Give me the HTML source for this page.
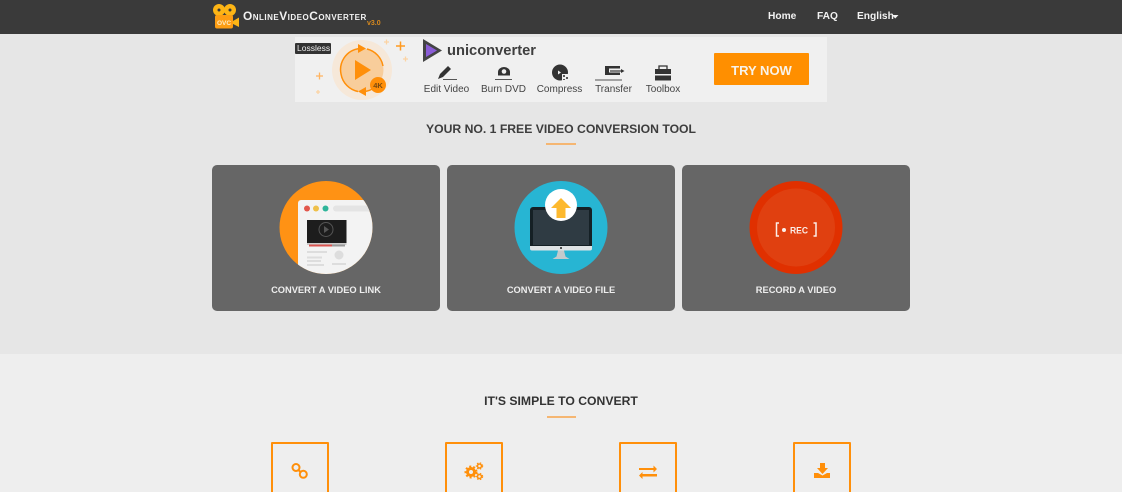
<!DOCTYPE html>
<html><head><meta charset="utf-8"><style>
html,body{margin:0;padding:0;width:1122px;height:492px;overflow:hidden;background:#eee;font-family:"Liberation Sans",sans-serif}
#w{position:relative;width:1122px;height:492px;overflow:hidden}
.a{position:absolute}
.t{position:absolute;white-space:nowrap;line-height:1}
svg{position:absolute;overflow:hidden}
.card{position:absolute;top:165px;width:228px;height:146px;background:#666;border-radius:5px}
.lab{position:absolute;top:284px;width:228px;text-align:center;font-size:9.3px;line-height:12px;color:#eee;font-weight:bold;white-space:nowrap}
.box{position:absolute;top:442px;width:54px;height:60px;border:2px solid #ff8f0a;border-radius:1px}
.bl{position:absolute;top:84px;font-size:10px;line-height:12px;color:#444;white-space:nowrap;transform:translateX(-50%)}
</style></head><body><div id="w">
<div class="a" style="left:0;top:34px;width:1122px;height:320px;background:#e6e6e6"></div>
<div class="a" style="left:0;top:354px;width:1122px;height:138px;background:#eee"></div>
<div class="a" style="left:0;top:0;width:1122px;height:34px;background:#3a3a3a"></div>

<svg style="left:212px;top:3px" width="30" height="26" viewBox="0 0 30 26">
<circle cx="7" cy="7" r="6" fill="#fdb515"/><circle cx="18" cy="7" r="6" fill="#fdb515"/>
<circle cx="7" cy="7" r="1.500" fill="#3a3a3a"/><circle cx="18" cy="7" r="1.500" fill="#3a3a3a"/>
<rect x="3" y="12" width="18" height="13.500" rx="2" fill="#fd9d13"/>
<path d="M21 18l6-3.500V24l-6-3z" fill="#fdb515"/>
<text x="12" y="22" font-size="6.500" font-weight="bold" fill="#ffe9bf" text-anchor="middle" font-family="Liberation Sans">OVC</text>
</svg>
<div class="t" style="left:243px;top:11px;font-size:11.900px;letter-spacing:.5px;font-weight:bold;color:#f2f2f2;font-variant:small-caps">OnlineVideoConverter</div>
<div class="t" style="left:367px;top:20px;font-size:7px;font-weight:bold;color:#d98a1d">v3.0</div>
<div class="t" style="left:768px;top:12px;font-size:10.200px;font-weight:bold;color:#f2f2f2">Home</div>
<div class="t" style="left:817px;top:12px;font-size:10.200px;font-weight:bold;color:#f2f2f2">FAQ</div>
<div class="t" style="left:857px;top:12px;font-size:10.200px;font-weight:bold;color:#f2f2f2">English</div>
<svg style="left:892px;top:15px" width="7" height="4" viewBox="0 0 7 4"><path d="M0 0h6.500L3.250 3.500z" fill="#f2f2f2"/></svg>

<div class="a" style="left:295px;top:37px;width:532px;height:65px;background:#f0f0f0"></div>
<div class="a" style="left:295px;top:43px;width:36px;height:11px;background:#333;border-radius:1px"></div>
<div class="t" style="left:297px;top:44px;font-size:8.500px;color:#eee">Lossless</div>

<svg style="left:300px;top:36px;z-index:0" width="120" height="68" viewBox="300 36 120 68">
<circle cx="362" cy="70" r="30" fill="#f6e8d9"/>
<circle cx="362" cy="70" r="21.500" fill="#f8cd9b"/>
<path d="M344 58A21.500 21.500 0 0 1 360 48.500M367 49A21.500 21.500 0 0 1 383 66M381 80A21.500 21.500 0 0 1 365 91.500M358 91.500A21.500 21.500 0 0 1 341 74A21.500 21.500 0 0 1 344 58" fill="none" stroke="#ff8f0a" stroke-width="1.500"/>
<path d="M358 44l8 4.500-8 4.500zM366 87l-8 4.500 8 4.500z" fill="#ff8f0a"/>
<path d="M355 60l16 10-16 10z" fill="#ff8f0a"/>
<circle cx="378" cy="85" r="8" fill="#ff8f0a"/>
<text x="378" y="88" font-size="7.500" font-weight="bold" fill="#7a4a10" text-anchor="middle" font-family="Liberation Sans">4K</text>
<path d="M396 46h9M400.500 41.500v9" stroke="#ff9a20" stroke-width="1.500"/>
<path d="M403 59h5M405.500 56.500v5M384 42h5M386.500 39.500v5M316 92h4M318 90v4" stroke="#fbd3a3" stroke-width="1.300"/>
<path d="M316 76h7M319.500 72.500v7" stroke="#ffb460" stroke-width="1.300"/>
</svg>

<svg style="left:423px;top:39px" width="20" height="23" viewBox="0 0 20 23">
<path d="M0 0L19 11.500 0 23z" fill="#444"/><path d="M3 5L14 11.500 3 18z" fill="#8a5cd6"/>
</svg>
<div class="t" style="left:447px;top:44px;font-size:14.700px;font-weight:bold;color:#3f3f3f">uniconverter</div>

<svg style="left:436px;top:64px" width="250" height="20" viewBox="436 64 250 20">
<path d="M438 79l2-5 8-8 3 3-8 8z" fill="#333"/><path d="M443 79.500h14" stroke="#555" stroke-width="1"/>
<path d="M498 72a6 5 0 0 1 12 0v3.500h-12z" fill="#333"/><circle cx="504" cy="71.500" r="2.300" fill="#f0f0f0"/><path d="M495 79.500h17" stroke="#555" stroke-width="1"/>
<circle cx="560" cy="72.500" r="8" fill="#333"/><rect x="562" y="74" width="7" height="7" fill="#f0f0f0"/><path d="M563 75h2v2h-2zM566 77h2v2h-2zM563 79h2v1h-2z" fill="#555"/><path d="M558 70.500l3 2-3 2z" fill="#f0f0f0"/>
<path d="M605 66h15v2.500h-11v4h11v2.500h-15z" fill="#333"/><path d="M610 71h12" stroke="#333" stroke-width="1.200"/><path d="M621 69l3.500 2-3.500 2z" fill="#333"/><path d="M595 80h27" stroke="#555" stroke-width="1"/>
<path d="M659 69v-3h8v3" fill="none" stroke="#333" stroke-width="1.300"/><rect x="655" y="69" width="16" height="5" fill="#333"/><rect x="655" y="75.500" width="16" height="5" fill="#333"/>
</svg>
<div class="bl" style="left:446.500px">Edit Video</div>
<div class="bl" style="left:503.500px">Burn DVD</div>
<div class="bl" style="left:559.500px">Compress</div>
<div class="bl" style="left:613.500px">Transfer</div>
<div class="bl" style="left:663px">Toolbox</div>

<div class="a" style="left:714px;top:53px;width:95px;height:32px;background:#ff8f00;border-radius:1px"></div>
<div class="t" style="left:714px;top:64px;width:95px;text-align:center;font-size:13px;font-weight:bold;color:#f8f3ea">TRY NOW</div>

<div class="t" style="left:0;top:123px;width:1122px;text-align:center;font-size:12.200px;font-weight:bold;color:#3d3d3d">YOUR NO. 1 FREE VIDEO CONVERSION TOOL</div>
<div class="a" style="left:546px;top:143px;width:30px;height:2px;background:#f5b672"></div>

<div class="card" style="left:212px"></div>
<div class="card" style="left:447px"></div>
<div class="card" style="left:682px"></div>

<svg style="left:212px;top:165px" width="228" height="146" viewBox="212 165 228 146">
<defs><clipPath id="c1"><circle cx="326" cy="227.500" r="46.500"/></clipPath></defs>
<circle cx="326" cy="227.500" r="46.500" fill="#ff9214"/>
<g clip-path="url(#c1)">
<rect x="298" y="200" width="90" height="90" rx="3" fill="#f3f3f3"/>
<circle cx="307" cy="208.500" r="3" fill="#e2574c"/><circle cx="316" cy="208.500" r="3" fill="#efc04a"/><circle cx="325.500" cy="208.500" r="3" fill="#2fb59a"/>
<rect x="333" y="205.500" width="50" height="6" rx="3" fill="#e4e4e4"/>
<rect x="307" y="220" width="39.500" height="23" fill="#1d1d1d"/><rect x="307" y="243" width="39.500" height="2" fill="#ccc"/>
<circle cx="326" cy="229.500" r="7" fill="none" stroke="#555" stroke-width="1"/><path d="M324 226l5 3.500-5 3.500z" fill="#555"/>
<rect x="309" y="244.500" width="23" height="2" fill="#d9534f"/><rect x="332" y="244.500" width="13" height="2" fill="#999"/>
<rect x="307" y="251" width="20" height="2" fill="#ddd"/><rect x="307" y="256.500" width="15" height="2" fill="#ddd"/><rect x="307" y="260" width="14" height="2" fill="#ddd"/><rect x="307" y="264" width="17" height="2" fill="#ddd"/>
<circle cx="339" cy="255" r="4.500" fill="#ddd"/><rect x="332" y="263" width="14" height="2" fill="#ddd"/>
</g>
</svg>
<div class="lab" style="left:212px">CONVERT A VIDEO LINK</div>

<svg style="left:447px;top:165px" width="228" height="146" viewBox="447 165 228 146">
<circle cx="561" cy="227.500" r="46.500" fill="#27b5d3"/>
<path d="M530 210a3 3 0 0 1 3-3h56a3 3 0 0 1 3 3v36h-62z" fill="#152025"/>
<rect x="533" y="210" width="56" height="35" fill="#2f3b43"/>
<path d="M530 246h62v2.500a2 2 0 0 1-2 2h-58a2 2 0 0 1-2-2z" fill="#dfe3e5"/>
<path d="M558 250.500h6l1.500 6 4 2.500h-17l4-2.500z" fill="#c5cacc"/>
<circle cx="561" cy="248" r="1" fill="#222"/>
<circle cx="561" cy="205" r="16" fill="#fff"/>
<path d="M561 198l10 10h-5.500v10h-9v-10h-5.500z" fill="#fdb92e"/>
</svg>
<div class="lab" style="left:447px">CONVERT A VIDEO FILE</div>

<svg style="left:682px;top:165px" width="228" height="146" viewBox="682 165 228 146">
<circle cx="796" cy="227.500" r="46.500" fill="#e03000"/>
<circle cx="796" cy="227.500" r="39" fill="#e04010"/>
<path d="M779 223h-2.500v13h2.500M813.500 223h2.500v13h-2.500" fill="none" stroke="#fbeee8" stroke-width="1.500"/>
<circle cx="784" cy="230" r="2" fill="#fbeee8"/>
<text x="799" y="233.500" font-size="9.500" font-weight="bold" fill="#fbeee8" text-anchor="middle" font-family="Liberation Sans" textLength="18" lengthAdjust="spacingAndGlyphs">REC</text>
</svg>
<div class="lab" style="left:682px">RECORD A VIDEO</div>

<div class="t" style="left:0;top:395px;width:1122px;text-align:center;font-size:12.200px;font-weight:bold;color:#333">IT'S SIMPLE TO CONVERT</div>
<div class="a" style="left:547px;top:416px;width:29px;height:2px;background:#f5b672"></div>

<div class="box" style="left:271px"></div>
<div class="box" style="left:445px"></div>
<div class="box" style="left:619px"></div>
<div class="box" style="left:793px"></div>

<svg style="left:270px;top:440px" width="600" height="52" viewBox="270 440 600 52">
<g fill="none" stroke="#ff8f0a" stroke-width="2"><circle cx="296" cy="467.500" r="3.500"/><circle cx="303.300" cy="474.300" r="3.500"/><path d="M298.500 470l2 2"/></g>
<g fill="none" stroke="#ff8f0a"><circle cx="471" cy="472" r="3.500" stroke-width="3"/><circle cx="471" cy="472" r="5.500" stroke-width="2" stroke-dasharray="2 2"/><circle cx="479.500" cy="466" r="2" stroke-width="1.500"/><circle cx="479.500" cy="466" r="3.200" stroke-width="1" stroke-dasharray="1.500 1.500"/><circle cx="479.500" cy="476.500" r="2" stroke-width="1.500"/><circle cx="479.500" cy="476.500" r="3.200" stroke-width="1" stroke-dasharray="1.500 1.500"/></g>
<path d="M639 468h14.500v-2.500l3.500 3.500-3.500 3.500v-2.500h-14.500zM657 474v2.500h-14.500v2.500l-3.500-3.500 3.500-3.500v2z" fill="#ff8f0a"/>
<path d="M820 463h5v5h3l-5.500 6-5.500-6h3z" fill="#ff8f0a"/>
<path d="M814 473h4l4.500 2.500 4.500-2.500h3v5h-16z" fill="#ff8f0a"/>
</svg>
</div></body></html>
